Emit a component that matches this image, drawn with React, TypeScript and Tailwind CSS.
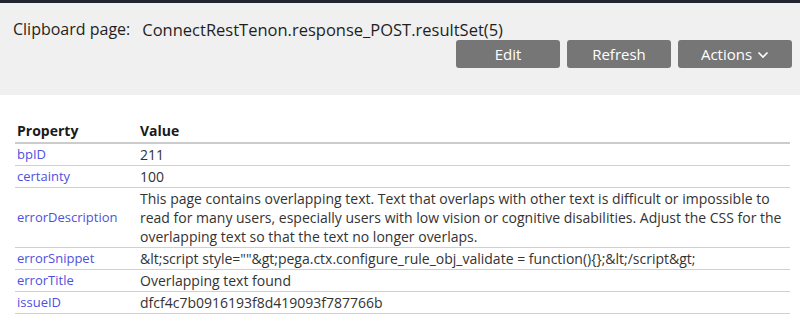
import React from "react";

const rows: { name: string; value: string }[] = [
  { name: "bpID", value: "211" },
  { name: "certainty", value: "100" },
  {
    name: "errorDescription",
    value:
      "This page contains overlapping text. Text that overlaps with other text is difficult or impossible to read for many users, especially users with low vision or cognitive disabilities. Adjust the CSS for the overlapping text so that the text no longer overlaps.",
  },
  {
    name: "errorSnippet",
    value:
      '&lt;script style=""&gt;pega.ctx.configure_rule_obj_validate = function(){};&lt;/script&gt;',
  },
  { name: "errorTitle", value: "Overlapping text found" },
  { name: "issueID", value: "dfcf4c7b0916193f8d419093f787766b" },
];

function Chevron() {
  return (
    <svg width="12" height="8" viewBox="0 0 12 8" className="ml-[5px] mt-[2px]">
      <path d="M1.5 1.5 L6 6 L10.5 1.5" fill="none" stroke="white" strokeWidth="1.6" />
    </svg>
  );
}

export default function App() {
  return (
    <div className="min-h-[314px] bg-white font-['Open_Sans',sans-serif] text-[#222]">
      <div className="h-[3px] bg-[#22252f]" />
      <div className="bg-[#f0f0f0] pl-[13px] pr-[8px] pt-[16px] pb-[27px]">
        <div className="flex items-center text-[16px] leading-[21px] text-[#1f1f1f]">
          <span>Clipboard page:</span>
          <span className="ml-[12px] text-[16.5px]">ConnectRestTenon.response_POST.resultSet(5)</span>
        </div>
        <div className="flex justify-end gap-[7px]">
          <button className="flex h-[28px] w-[104px] items-center justify-center rounded-[3px] bg-[#767676] text-[15px] text-white">
            Edit
          </button>
          <button className="flex h-[28px] w-[104px] items-center justify-center rounded-[3px] bg-[#767676] text-[15px] text-white">
            Refresh
          </button>
          <button className="flex h-[28px] w-[114px] items-center justify-center rounded-[3px] bg-[#767676] text-[15px] text-white">
            Actions
            <Chevron />
          </button>
        </div>
      </div>
      <div className="pl-[15px] pr-[10px] pt-[24px]">
        <table className="w-full border-collapse text-left text-[14px] leading-[19px]">
          <thead>
            <tr className="border-b-2 border-[#cccccc]">
              <th className="w-[125px] py-[2px] pl-[2px] font-bold text-[#1a1a1a]">Property</th>
              <th className="py-[2px] font-bold text-[#1a1a1a]">Value</th>
            </tr>
          </thead>
          <tbody>
            {rows.map((r) => (
              <tr key={r.name} className="border-b border-[#d0d0d0]">
                <td className="py-[1px] pl-[2px] align-middle text-[13px] text-[#5050e0]">{r.name}</td>
                <td className="py-[1px] text-[#333]">{r.value}</td>
              </tr>
            ))}
          </tbody>
        </table>
      </div>
    </div>
  );
}
